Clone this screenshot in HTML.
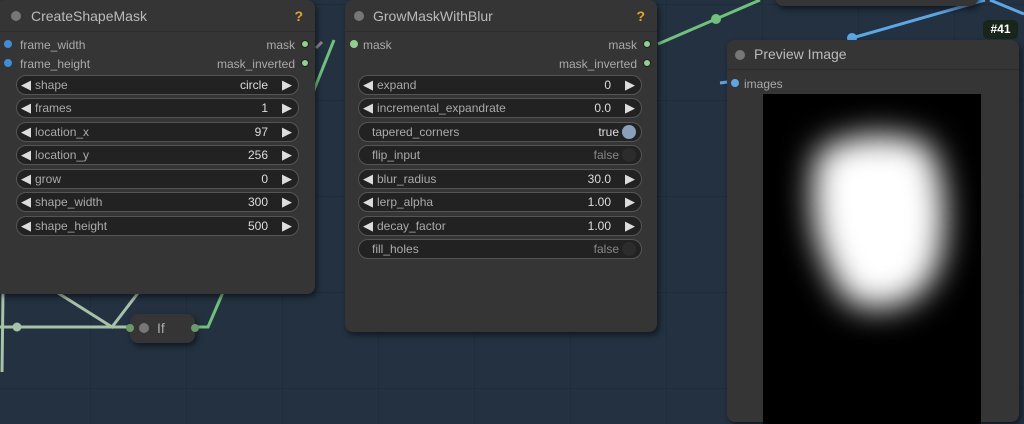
<!DOCTYPE html>
<html><head><style>
*{margin:0;padding:0;box-sizing:border-box}
body{width:1024px;height:424px;overflow:hidden;background:#233140;font-family:"Liberation Sans",sans-serif;position:relative}
.grid{position:absolute;inset:0;background-image:linear-gradient(#1f2c39 1px,transparent 1px),linear-gradient(90deg,#1f2c39 1px,transparent 1px);background-size:96px 96px;background-position:-6px 4px}
.node{position:absolute;background:#353535;border-radius:8px;box-shadow:2px 3px 6px rgba(0,0,0,.5)}
.title{position:absolute;left:0;right:0;top:0;height:32px;border-bottom:1px solid #2c2c2c;color:#bbb;font-size:14px;line-height:32px;padding-left:30px}
.title .dot{position:absolute;left:11px;top:11px;width:10px;height:10px;border-radius:50%;background:#777}
.q{position:absolute;right:12px;top:0;color:#e4a52b;font-weight:bold;font-size:14px}
.slot{position:absolute;font-size:12px;color:#aaa;line-height:14px}
.sd{position:absolute;width:8px;height:8px;border-radius:50%}
.w{position:absolute;height:20px;background:#222;border:1px solid #555;border-radius:10px;font-size:12px;line-height:18px;color:#aaa}
.w .l{position:absolute;left:18px}
.w .v{position:absolute;right:30px;color:#ddd}
.w .al,.w .ar{position:absolute;top:0;color:#ddd;font-size:13px}
.w .al{left:4px}.w .ar{right:6px}
.w.t .l{left:13px}
.w.t .v{right:22px}
.knob{position:absolute;right:5px;top:2px;width:14px;height:14px;border-radius:50%;background:#2c2c2c}
</style></head><body>
<div class="grid"></div>
<svg width="1024" height="424" style="position:absolute;left:0;top:0">
<g fill="none" stroke-width="3">
<path d="M658 44 L716 19 L760 0" stroke="#6fc27a"/>
<path d="M852 38 L985 0" stroke="#5aa7e6"/>
<path d="M990 0 L1024 14" stroke="#5aa7e6"/>
<path d="M312 95 L334 40" stroke="#6fc27a"/>
<path d="M196 327 L208 327 L224 290" stroke="#6fc27a"/>
<path d="M0 327 L130 327" stroke="#a8c2a8"/>
<path d="M58 293 L112 327 L138 293" stroke="#a8c2a8"/>
<path d="M3 293 L2 372" stroke="#a8c2a8"/>
<path d="M720 83 L727 82" stroke="#5aa7e6"/>
<path d="M316 48 L322 42" stroke="#888"/>
</g>
<circle cx="716" cy="19" r="5" fill="#6fc27a"/>
<circle cx="852" cy="38" r="5" fill="#5aa7e6"/>
<circle cx="17" cy="327" r="4.5" fill="#a8c2a8"/>
</svg>
<div class="node" style="left:775px;top:-20px;width:203px;height:26px;background:#353535"></div>
<div style="position:absolute;left:983px;top:20px;width:35px;height:19px;background:#17251a;border-radius:5px;color:#fff;font-size:12px;font-weight:bold;line-height:19px;text-align:center">#41</div>

<div class="node" style="left:-4px;top:0;width:319px;height:294px">
<div class="title" style="padding-left:35px"><div class="dot" style="left:15px"></div>CreateShapeMask<span class="q">?</span></div>
<div class="sd" style="left:8px;top:40px;background:#3d8ed6"></div><div class="slot" style="left:24px;top:38px">frame_width</div>
<div class="sd" style="left:8px;top:59px;background:#3d8ed6"></div><div class="slot" style="left:24px;top:57px">frame_height</div>
<div class="slot" style="right:20px;top:38px">mask</div><div class="sd" style="right:6px;top:40px;background:#8fd08f;border:1px solid #222"></div>
<div class="slot" style="right:20px;top:57px">mask_inverted</div><div class="sd" style="right:6px;top:59px;background:#8fd08f;border:1px solid #222"></div>
</div>
<div class="w" style="left:16px;top:75px;width:283px"><span class="al">◀</span><span class="l">shape</span><span class="v">circle</span><span class="ar">▶</span></div>
<div class="w" style="left:16px;top:98px;width:283px"><span class="al">◀</span><span class="l">frames</span><span class="v">1</span><span class="ar">▶</span></div>
<div class="w" style="left:16px;top:122px;width:283px"><span class="al">◀</span><span class="l">location_x</span><span class="v">97</span><span class="ar">▶</span></div>
<div class="w" style="left:16px;top:145px;width:283px"><span class="al">◀</span><span class="l">location_y</span><span class="v">256</span><span class="ar">▶</span></div>
<div class="w" style="left:16px;top:169px;width:283px"><span class="al">◀</span><span class="l">grow</span><span class="v">0</span><span class="ar">▶</span></div>
<div class="w" style="left:16px;top:192px;width:283px"><span class="al">◀</span><span class="l">shape_width</span><span class="v">300</span><span class="ar">▶</span></div>
<div class="w" style="left:16px;top:216px;width:283px"><span class="al">◀</span><span class="l">shape_height</span><span class="v">500</span><span class="ar">▶</span></div>

<div class="node" style="left:345px;top:0;width:312px;height:332px">
<div class="title" style="padding-left:28px"><div class="dot" style="left:9px"></div>GrowMaskWithBlur<span class="q">?</span></div>
<div class="sd" style="left:5px;top:40px;background:#8fd08f"></div><div class="slot" style="left:18px;top:38px">mask</div>
<div class="slot" style="right:20px;top:38px">mask</div><div class="sd" style="right:6px;top:40px;background:#8fd08f;border:1px solid #222"></div>
<div class="slot" style="right:20px;top:57px">mask_inverted</div><div class="sd" style="right:6px;top:59px;background:#8fd08f;border:1px solid #222"></div>
</div>
<div class="w" style="left:358px;top:75px;width:284px"><span class="al">◀</span><span class="l">expand</span><span class="v">0</span><span class="ar">▶</span></div>
<div class="w" style="left:358px;top:98px;width:284px"><span class="al">◀</span><span class="l">incremental_expandrate</span><span class="v">0.0</span><span class="ar">▶</span></div>
<div class="w t" style="left:358px;top:122px;width:284px"><span class="l">tapered_corners</span><span class="v">true</span><span class="knob" style="background:#8aa0b8"></span></div>
<div class="w t" style="left:358px;top:145px;width:284px"><span class="l">flip_input</span><span class="v" style="color:#888">false</span><span class="knob"></span></div>
<div class="w" style="left:358px;top:169px;width:284px"><span class="al">◀</span><span class="l">blur_radius</span><span class="v">30.0</span><span class="ar">▶</span></div>
<div class="w" style="left:358px;top:192px;width:284px"><span class="al">◀</span><span class="l">lerp_alpha</span><span class="v">1.00</span><span class="ar">▶</span></div>
<div class="w" style="left:358px;top:216px;width:284px"><span class="al">◀</span><span class="l">decay_factor</span><span class="v">1.00</span><span class="ar">▶</span></div>
<div class="w t" style="left:358px;top:239px;width:284px"><span class="l">fill_holes</span><span class="v" style="color:#888">false</span><span class="knob"></span></div>

<div class="node" style="left:130px;top:314px;width:65px;height:29px;border-radius:8px">
<div class="sd" style="left:-4px;top:10px;background:#6a9a6a"></div>
<div style="position:absolute;left:9px;top:9px;width:10px;height:10px;border-radius:50%;background:#777"></div>
<div style="position:absolute;left:27px;top:6px;color:#aaa;font-size:14px">If</div>
<div class="sd" style="right:-4px;top:10px;background:#6a9a6a"></div>
</div>

<div class="node" style="left:727px;top:40px;width:292px;height:382px">
<div class="title" style="height:30px;line-height:28px;padding-left:27px"><div class="dot" style="left:8px;top:10px"></div>Preview Image</div>
<div class="sd" style="left:4px;top:39px;background:#5aa7e6"></div><div class="slot" style="left:17px;top:37px">images</div>
</div>
<svg style="position:absolute;left:763px;top:94px" width="218" height="330">
<defs><filter id="b" x="-50%" y="-50%" width="200%" height="200%"><feGaussianBlur stdDeviation="16"/></filter></defs>
<rect width="218" height="330" fill="#000"/>
<path d="M58 55 Q110 30 165 50 Q186 90 180 145 Q176 195 138 210 Q95 222 78 198 Q50 150 50 110 Q48 70 58 55Z" fill="#fff" filter="url(#b)"/>
</svg>
</body></html>
